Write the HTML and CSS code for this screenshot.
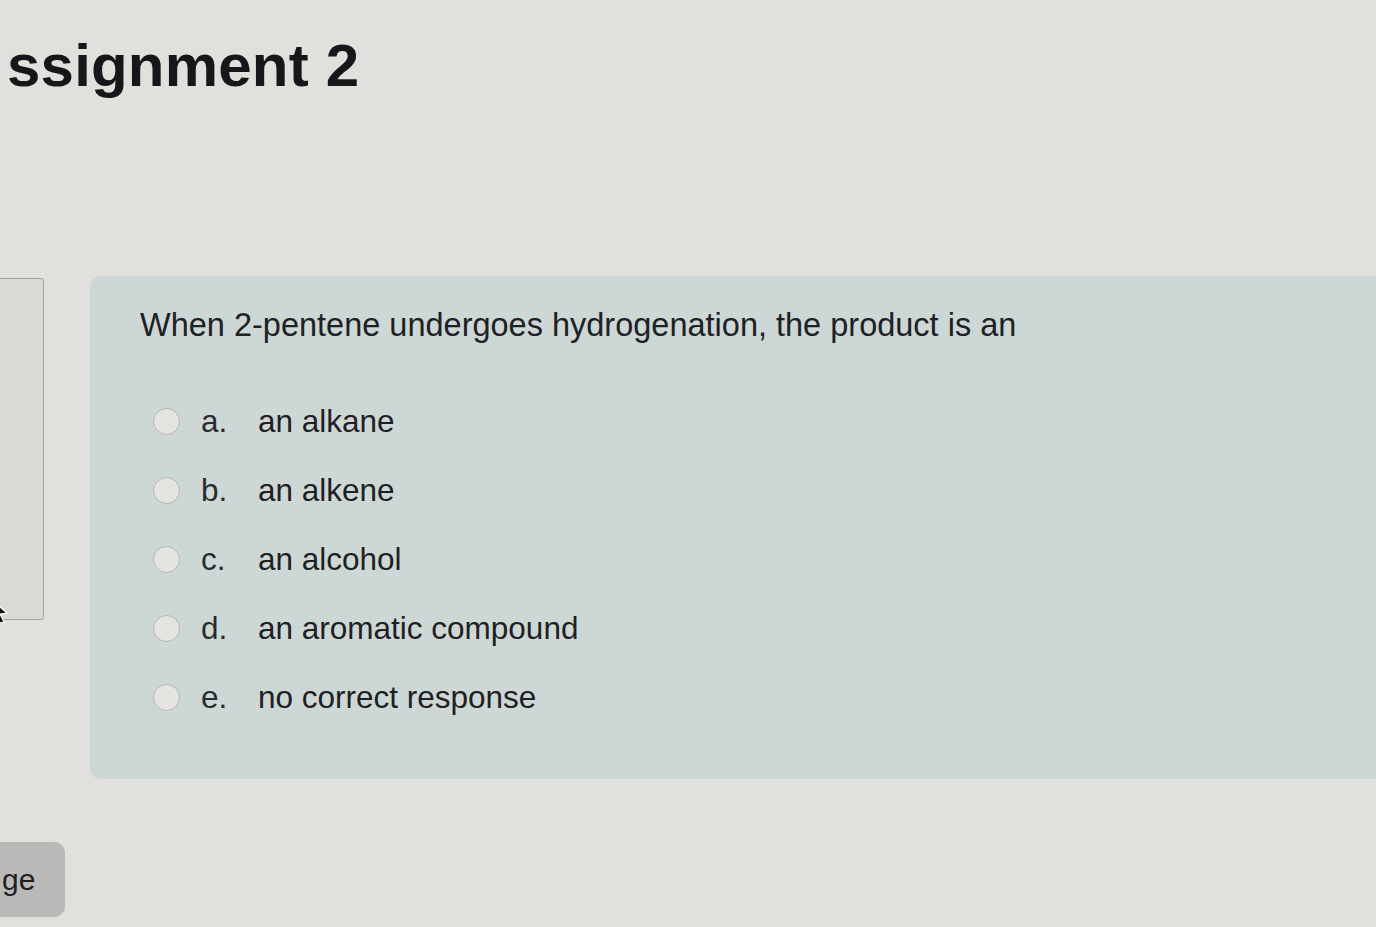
FILE: index.html
```html
<!DOCTYPE html>
<html lang="en">
<head>
<meta charset="utf-8">
<title>Assignment 2</title>
<link rel="stylesheet" href="styles.css">
</head>
<body>
<div class="page">
  <h1 class="title">ssignment 2</h1>
  <div class="content">
    <aside class="sidebox">
      <svg class="cursor" width="14" height="26" viewBox="0 0 14 26"><path d="M-6 2 L10 16 L3 17 L7 25 L3 26 L-1 18 L-6 22 Z" fill="#111" stroke="#fff" stroke-width="1.2"/></svg>
    </aside>
    <section class="question">
      <p class="prompt">When 2-pentene undergoes hydrogenation, the product is an</p>
      <ul class="options">
        <li class="option"><span class="radio"></span><span class="letter">a.</span><span class="answer">an alkane</span></li>
        <li class="option"><span class="radio"></span><span class="letter">b.</span><span class="answer">an alkene</span></li>
        <li class="option"><span class="radio"></span><span class="letter">c.</span><span class="answer">an alcohol</span></li>
        <li class="option"><span class="radio"></span><span class="letter">d.</span><span class="answer">an aromatic compound</span></li>
        <li class="option"><span class="radio"></span><span class="letter">e.</span><span class="answer">no correct response</span></li>
      </ul>
    </section>
  </div>
  <div class="footer">
    <button class="btn">ge</button>
  </div>
</div>
</body>
</html>
```

FILE: styles.css
```css
html, body {
  margin: 0;
  padding: 0;
  height: 100%;
  overflow: hidden;
}
body {
  background: #e2e0dc;
  font-family: "Liberation Sans", Arial, sans-serif;
  color: #1f2022;
}
.page {
  display: flex;
  flex-direction: column;
}
.title {
  margin: 0 0 0 7px;
  padding-top: 31px;
  font-size: 60px;
  line-height: 69px;
  font-weight: 700;
  color: #16171a;
  letter-spacing: 0.2px;
}
.content {
  display: flex;
  align-items: flex-start;
  gap: 46px;
  margin-top: 176px;
}
.sidebox {
  position: relative;
  flex: 0 0 auto;
  width: 56px;
  height: 342px;
  margin-left: -12px;
  margin-top: 2px;
  box-sizing: border-box;
  border: 1.5px solid #a3a3a2;
  border-radius: 3px;
  background: #dad9d6;
}
.cursor {
  position: absolute;
  left: 8px;
  top: 318px;
}
.question {
  flex: 1 1 auto;
  margin-right: -20px;
  background: #cdd8d6;
  border-radius: 10px;
  padding: 31px 0 44px 50px;
  height: 503px;
  box-sizing: border-box;
}
.prompt {
  margin: 0;
  font-size: 32.5px;
  line-height: 37px;
  color: #202124;
}
.options {
  list-style: none;
  margin: 43px 0 0 0;
  padding: 0 0 0 13px;
}
.option {
  display: flex;
  align-items: center;
  height: 69px;
  font-size: 31.5px;
}
.radio {
  flex: 0 0 auto;
  width: 25px;
  height: 25px;
  border-radius: 50%;
  background: #e6e4e0;
  border: 1.5px solid #b4b6b4;
  margin-right: 21px;
}
.letter {
  width: 57px;
  color: #2a2b2e;
}
.answer {
  color: #1f2023;
}
.footer {
  margin-top: 63px;
  display: flex;
}
.btn {
  margin-left: -10px;
  height: 75px;
  padding: 0 30px 0 12px;
  border: none;
  border-radius: 11px;
  background: #b9b9b7;
  font-family: "Liberation Sans", Arial, sans-serif;
  font-size: 30px;
  color: #1f2023;
}
```
